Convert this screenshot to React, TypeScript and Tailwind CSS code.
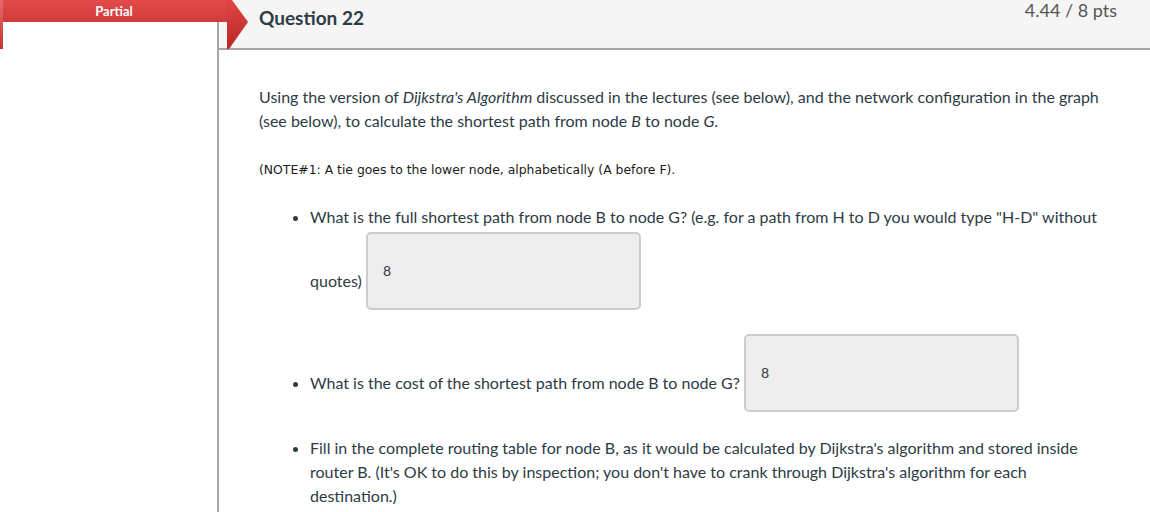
export default function App() {
  return (
    <div className="relative flex h-[512px] w-[1150px] overflow-hidden bg-white font-['Lato','Noto_Sans',sans-serif] text-[#2d3b45]">
      <div className="w-[217px] shrink-0" />
      <div className="flex-1 border-l-2 border-[#a6a6a6]">
        <div className="flex h-[50px] items-start justify-between border-b-2 border-[#a6a6a6] bg-[#f5f5f5] pl-[40px] pr-[33px]">
          <h2 className="mt-[6px] text-[19px] font-bold leading-[24px]">Question 22</h2>
          <div className="mt-[-2px] text-[18px] leading-[24px] text-[#555555]">4.44 / 8 pts</div>
        </div>
        <div className="pl-[40px] pr-[35px] pt-[35px] text-[16px] leading-[24px]">
          <p>
            Using the version of <em>Dijkstra's Algorithm</em> discussed in the lectures (see below), and the network configuration in the graph (see below), to calculate the shortest path from node <em>B</em> to node <em>G</em>.
          </p>
          <p className="mt-[25px] font-['DejaVu_Sans',sans-serif] text-[12.4px] text-[#1a1a1a]">
            (NOTE#1: A tie goes to the lower node, alphabetically (A before F).
          </p>
          <ul className="mt-[23px] list-disc pl-[51px]">
            <li>
              What is the full shortest path from node B to node G? (e.g. for a path from H to D you would type "H-D" without quotes){' '}
              <span className="my-[3px] inline-block h-[78px] w-[275px] rounded-[5px] border-2 border-[#cccccc] bg-[#eeeeee] pl-[15px] pt-[27px] align-[11px] text-[14px] leading-[20px]">
                8
              </span>
            </li>
            <li className="mt-[18px]">
              What is the cost of the shortest path from node B to node G?{' '}
              <span className="my-[3px] inline-block h-[78px] w-[275px] rounded-[5px] border-2 border-[#cccccc] bg-[#eeeeee] pl-[15px] pt-[27px] align-[11px] text-[14px] leading-[20px]">
                8
              </span>
            </li>
            <li className="mt-[21px]">
              Fill in the complete routing table for node B, as it would be calculated by Dijkstra's algorithm and stored inside router B. (It's OK to do this by inspection; you don't have to crank through Dijkstra's algorithm for each destination.)
            </li>
          </ul>
        </div>
      </div>

      {/* Partial banner overlay */}
      <div className="absolute left-0 top-0 flex h-[22px] w-[228px] items-center justify-center bg-gradient-to-b from-[#e24b4b] to-[#d23a3a] text-[13px] font-bold leading-[22px] text-white">
        Partial
      </div>
      <div className="absolute left-0 top-0 h-[49px] w-[3px] bg-gradient-to-b from-[#e86a6a] to-[#c53333]" />
      <svg className="absolute left-[227px] top-0" width="22" height="50" viewBox="0 0 22 50">
        <defs>
          <linearGradient id="arr" x1="0" y1="0" x2="0" y2="1">
            <stop offset="0" stopColor="#e04646" />
            <stop offset="1" stopColor="#b92626" />
          </linearGradient>
        </defs>
        <polygon points="0,0 5,0 21,22 2,49 0,49" fill="url(#arr)" />
      </svg>
    </div>
  );
}
